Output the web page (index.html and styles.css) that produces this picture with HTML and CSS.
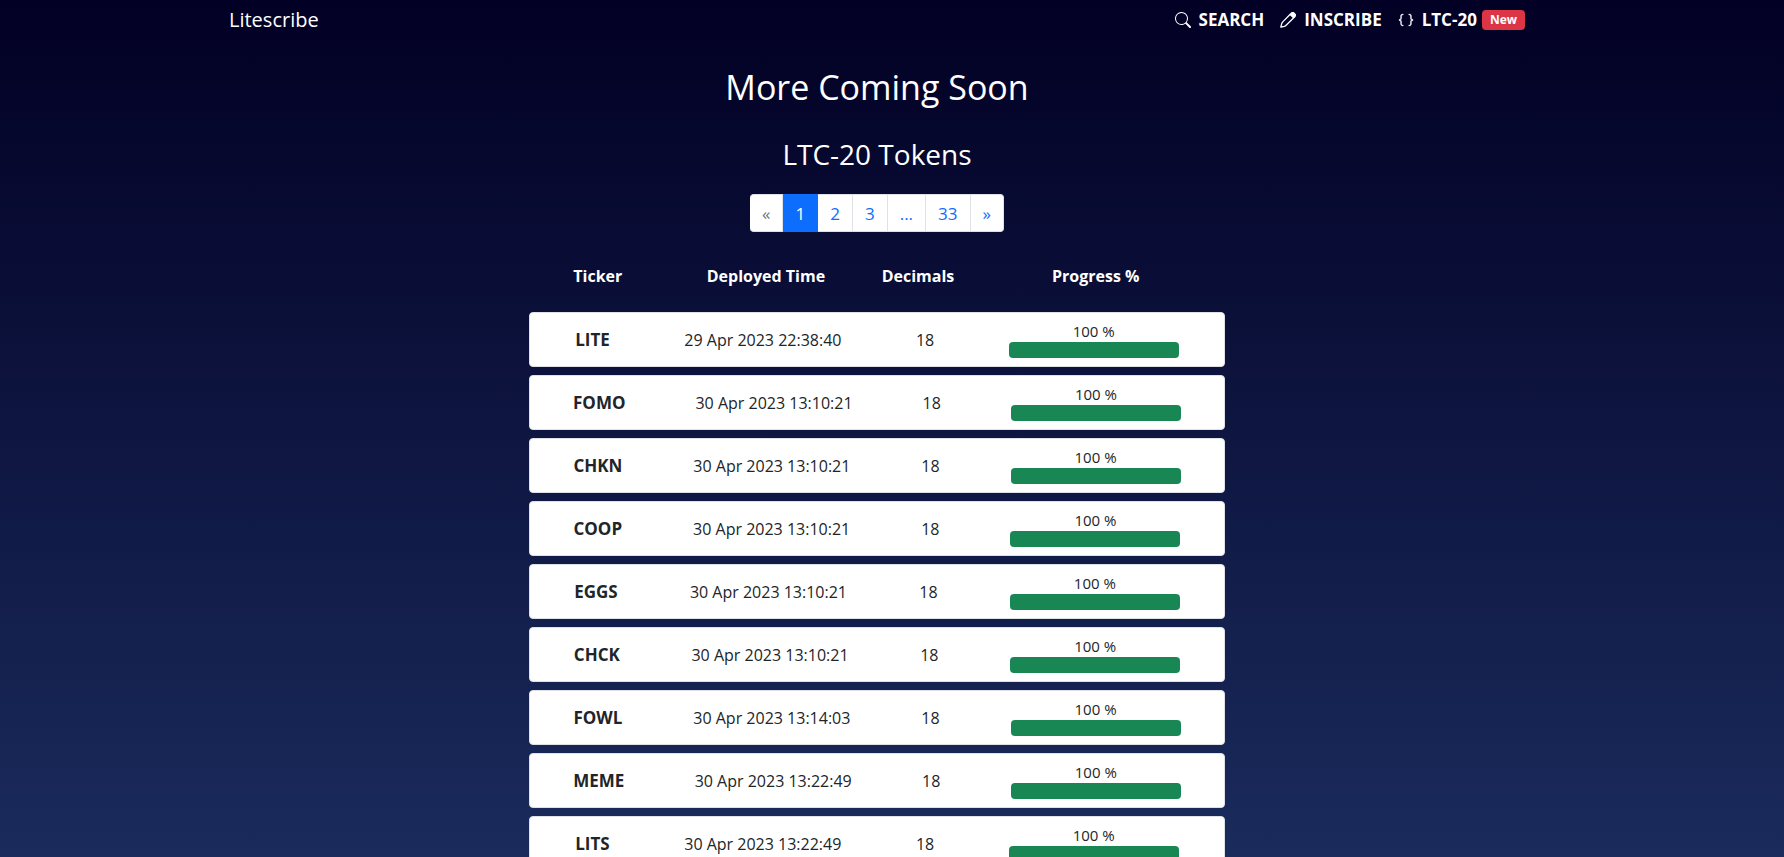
FILE: index.html
```html
<!DOCTYPE html>
<html lang="en">
<head>
  <meta charset="UTF-8">
  <title>Litescribe</title>
  <link rel="stylesheet" href="styles.css">
</head>
<body>
  <header class="navbar">
    <a class="brand" href="#">Litescribe</a>
    <nav class="menu">
      <a href="#search">
        <svg width="16" height="16" viewBox="0 0 16 16" fill="currentColor"><path d="M11.742 10.344a6.5 6.5 0 1 0-1.397 1.398h-.001c.03.04.062.078.098.115l3.85 3.85a1 1 0 0 0 1.415-1.414l-3.85-3.85a1.007 1.007 0 0 0-.115-.1zM12 6.5a5.5 5.5 0 1 1-11 0 5.5 5.5 0 0 1 11 0z"/></svg>
        <span>SEARCH</span>
      </a>
      <a href="#inscribe">
        <svg width="16" height="16" viewBox="0 0 16 16"><path d="M10 2.5 3 9.6Q2 10.6 1.7 11.6L.8 15.2l3.6-.9q1-.3 2-1.3l7.1-7" fill="none" stroke="currentColor" stroke-width="1.3" stroke-linejoin="round"/><path d="M9.2 2.4 10.8.8a2.7 2.7 0 0 1 3.8 0l.6.6a2.7 2.7 0 0 1 0 3.8l-1.6 1.6z" fill="currentColor"/></svg>
        <span>INSCRIBE</span>
      </a>
      <a href="#ltc20">
        <svg width="16" height="16" viewBox="0 0 16 16" fill="currentColor" stroke="currentColor" stroke-width=".3"><path d="M2.114 8.063V7.9c1.005-.102 1.497-.615 1.497-1.6V4.503c0-1.094.39-1.538 1.354-1.538h.273V2h-.376C3.25 2 2.49 2.759 2.49 4.352v1.524c0 1.094-.376 1.456-1.49 1.456v1.299c1.114 0 1.49.362 1.49 1.456v1.524c0 1.593.759 2.352 2.372 2.352h.376v-.964h-.273c-.964 0-1.354-.444-1.354-1.538V9.663c0-.984-.492-1.497-1.497-1.6zM13.886 7.9v.163c-1.005.103-1.497.616-1.497 1.6v1.798c0 1.094-.39 1.538-1.354 1.538h-.273v.964h.376c1.613 0 2.372-.759 2.372-2.352v-1.524c0-1.094.376-1.456 1.49-1.456V7.332c-1.114 0-1.49-.362-1.49-1.456V4.352C13.51 2.759 12.75 2 11.138 2h-.376v.964h.273c.964 0 1.354.444 1.354 1.538V6.3c0 .984.492 1.497 1.497 1.6z"/></svg>
        <span>LTC-20</span>
        <span class="badge">New</span>
      </a>
    </nav>
  </header>

  <main>
    <h1>More Coming Soon</h1>
    <h2>LTC-20 Tokens</h2>

    <nav class="pagination">
      <button disabled>«</button>
      <button class="active">1</button>
      <button>2</button>
      <button>3</button>
      <button>...</button>
      <button>33</button>
      <button>»</button>
    </nav>

    <table class="tokens">
      <thead>
        <tr>
          <th class="ticker">Ticker</th>
          <th>Deployed Time</th>
          <th>Decimals</th>
          <th class="progress">Progress %</th>
        </tr>
      </thead>
      <tbody>
        <tr>
          <th>LITE</th>
          <td>29 Apr 2023 22:38:40</td>
          <td>18</td>
          <td class="progress"><label>100 %<progress value="100" max="100"></progress></label></td>
        </tr>
        <tr>
          <th>FOMO</th>
          <td>30 Apr 2023 13:10:21</td>
          <td>18</td>
          <td class="progress"><label>100 %<progress value="100" max="100"></progress></label></td>
        </tr>
        <tr>
          <th>CHKN</th>
          <td>30 Apr 2023 13:10:21</td>
          <td>18</td>
          <td class="progress"><label>100 %<progress value="100" max="100"></progress></label></td>
        </tr>
        <tr>
          <th>COOP</th>
          <td>30 Apr 2023 13:10:21</td>
          <td>18</td>
          <td class="progress"><label>100 %<progress value="100" max="100"></progress></label></td>
        </tr>
        <tr>
          <th>EGGS</th>
          <td>30 Apr 2023 13:10:21</td>
          <td>18</td>
          <td class="progress"><label>100 %<progress value="100" max="100"></progress></label></td>
        </tr>
        <tr>
          <th>CHCK</th>
          <td>30 Apr 2023 13:10:21</td>
          <td>18</td>
          <td class="progress"><label>100 %<progress value="100" max="100"></progress></label></td>
        </tr>
        <tr>
          <th>FOWL</th>
          <td>30 Apr 2023 13:14:03</td>
          <td>18</td>
          <td class="progress"><label>100 %<progress value="100" max="100"></progress></label></td>
        </tr>
        <tr>
          <th>MEME</th>
          <td>30 Apr 2023 13:22:49</td>
          <td>18</td>
          <td class="progress"><label>100 %<progress value="100" max="100"></progress></label></td>
        </tr>
        <tr>
          <th>LITS</th>
          <td>30 Apr 2023 13:22:49</td>
          <td>18</td>
          <td class="progress"><label>100 %<progress value="100" max="100"></progress></label></td>
        </tr>
      </tbody>
    </table>
  </main>
</body>
</html>
```
FILE: styles.css
```css
* {
  box-sizing: border-box;
}
html {
  background: linear-gradient(180deg, #020024, #1a2b5c) fixed;
}
body {
  margin: 0;
  padding-right: 30px;
  height: 100vh;
  overflow: hidden;
  font-family: "Open Sans", "Noto Sans", sans-serif;
  font-size: 16px;
  line-height: 24px;
  color: #fff;
}
a {
  color: inherit;
  text-decoration: none;
}

.navbar {
  display: flex;
  justify-content: space-between;
  align-items: center;
  max-width: 1320px;
  height: 40px;
  margin: 0 auto;
  padding: 0 12px;
}
.brand {
  font-size: 20px;
}
.menu {
  display: flex;
  gap: 16px;
  font-size: 17px;
  font-weight: 700;
}
.menu a {
  display: flex;
  align-items: center;
}
.menu svg {
  margin-right: 8px;
}
.badge {
  margin-left: 5px;
  padding: 0 8px;
  border-radius: 4px;
  background: #dc3545;
  font-size: 12px;
  line-height: 20px;
}

main {
  max-width: 720px;
  margin: 0 auto;
  padding: 0 12px;
  text-align: center;
}
h1, h2 {
  margin: 0;
  font-weight: 400;
}
h1 {
  margin-top: 24px;
  font-size: 34px;
  line-height: 46px;
}
h2 {
  margin-top: 24px;
  font-size: 28px;
  line-height: 40px;
}

.pagination {
  display: flex;
  justify-content: center;
  margin-top: 20px;
}
.pagination button {
  height: 38px;
  padding: 0 12px;
  border: 1px solid #dee2e6;
  border-left-width: 0;
  background: #fff;
  color: #0d6efd;
  font-family: inherit;
  font-size: 17px;
}
.pagination button:first-child {
  border-radius: 4px 0 0 4px;
  color: #6c757d;
}
.pagination button:last-child {
  border-radius: 0 4px 4px 0;
}
.pagination .active {
  border-color: #0d6efd;
  background: #0d6efd;
  color: #fff;
}

.tokens, .tokens thead, .tokens tbody {
  display: block;
}
.tokens tr {
  display: flex;
  justify-content: space-around;
  align-items: center;
}
.tokens th, .tokens td {
  padding: 0;
}
.tokens thead tr {
  margin: 32px 0 24px;
  padding: 0 16px;
}
.tokens .ticker {
  padding-right: 28px;
}
.tokens tbody tr {
  margin-bottom: 8px;
  padding: 8px;
  border: 1px solid #dee2e6;
  border-radius: 4px;
  background: #fff;
  color: #212529;
}
.tokens tbody th {
  font-size: 17px;
}
.tokens .progress {
  width: 170px;
}
label {
  display: block;
  font-size: 15px;
  line-height: 21px;
}
progress {
  display: block;
  width: 100%;
  height: 16px;
  border: 0;
  border-radius: 4px;
  overflow: hidden;
  appearance: none;
}
progress::-webkit-progress-bar {
  background: #e9ecef;
}
progress::-webkit-progress-value {
  background: #198754;
}
```
